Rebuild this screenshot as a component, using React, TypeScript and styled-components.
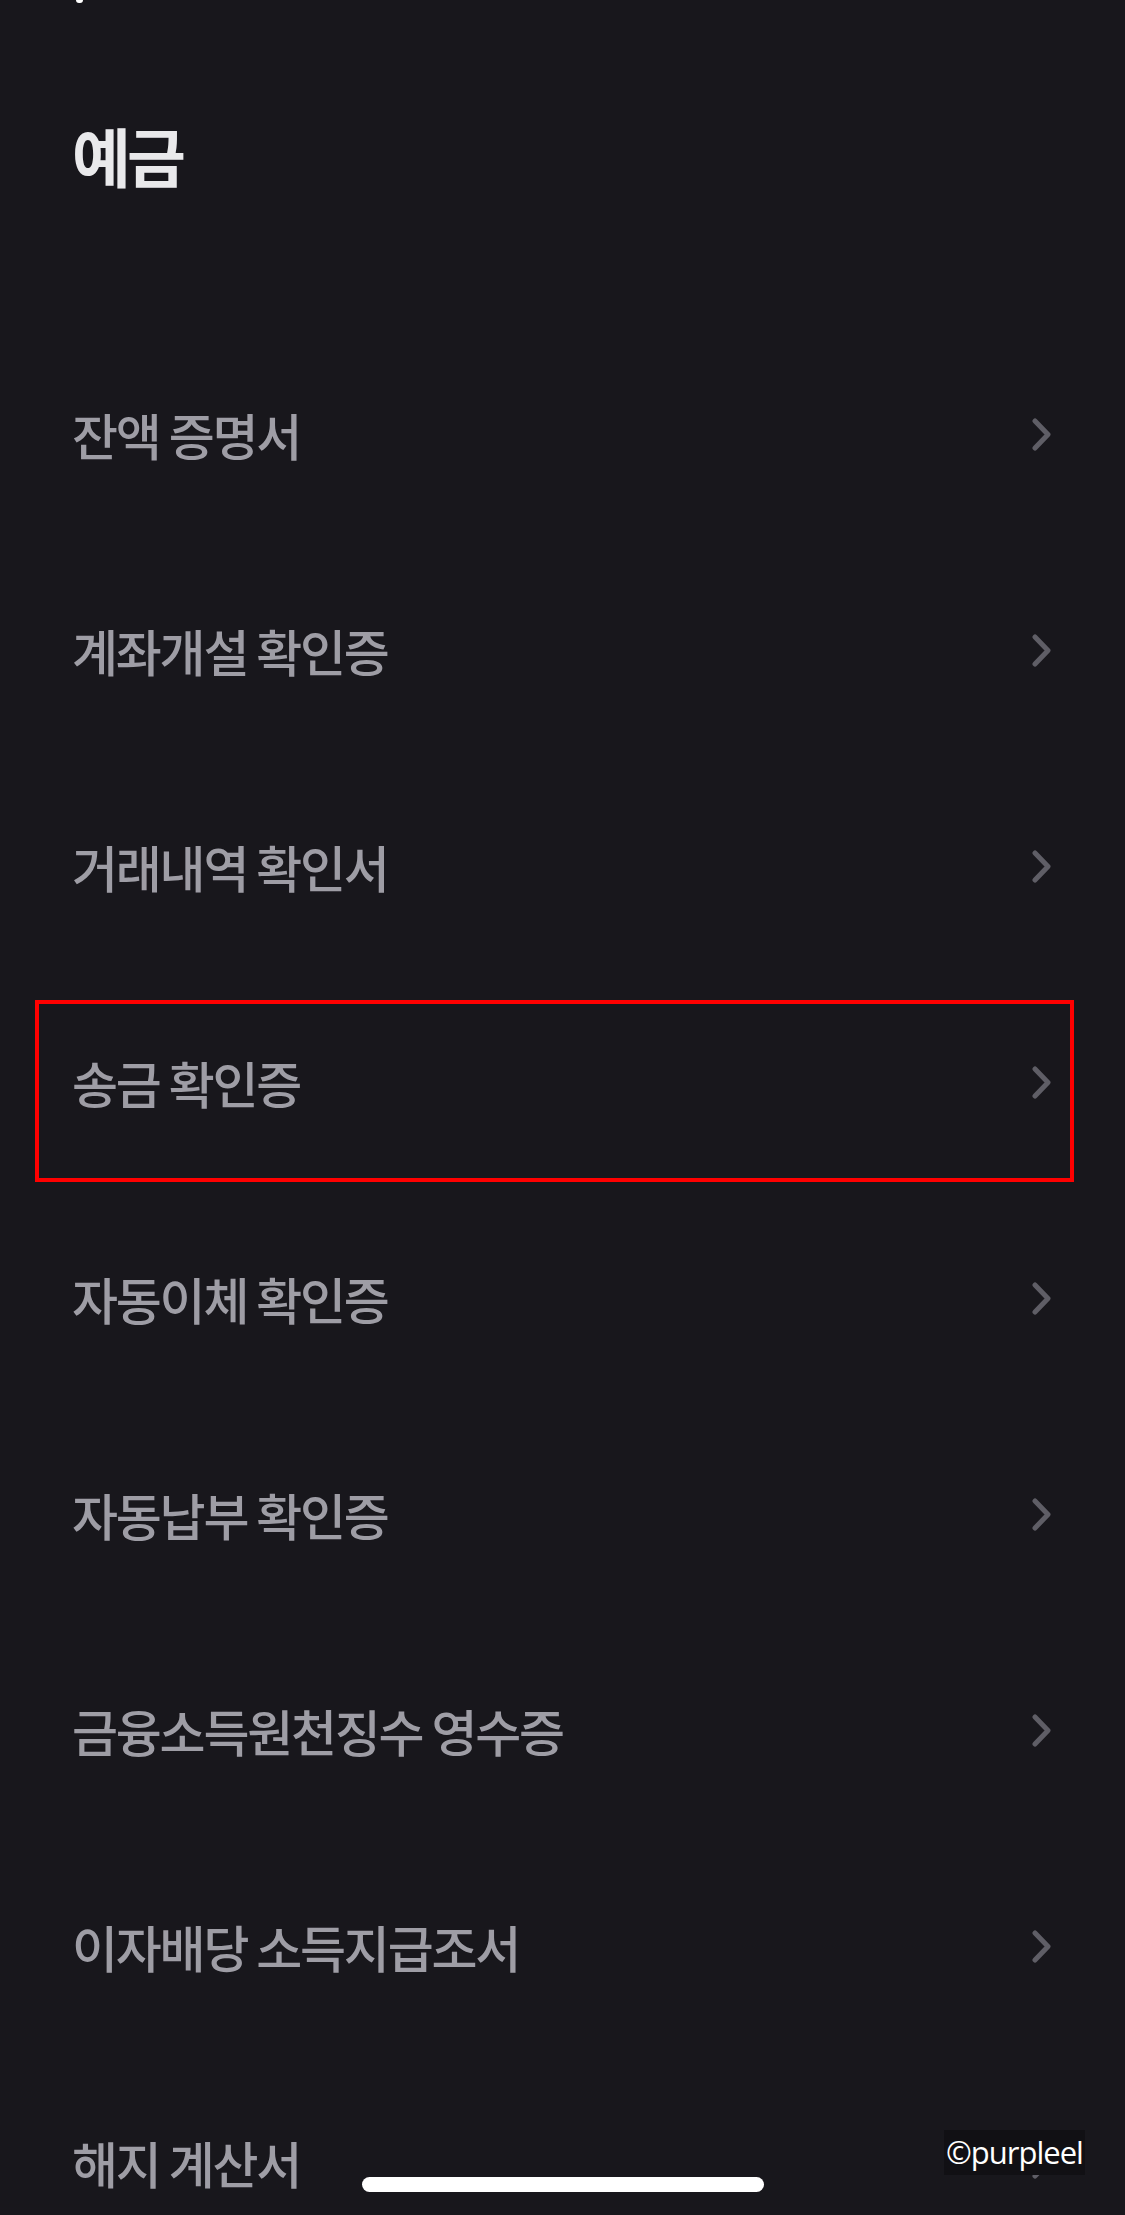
import React from 'react';
import styled, { createGlobalStyle } from 'styled-components';

const GlobalStyle = createGlobalStyle`
  html, body {
    margin: 0;
    padding: 0;
    background: #18171c;
  }
  body {
    font-family: 'Noto Sans CJK KR', 'Noto Sans', sans-serif;
  }
`;

const Page = styled.div`
  position: relative;
  width: 1125px;
  height: 2215px;
  overflow: hidden;
  background: #18171c;
  display: flex;
  flex-direction: column;
`;

const StatusCut = styled.div`
  position: absolute;
  top: -3px;
  left: 76px;
  width: 7px;
  height: 6px;
  border-radius: 3px;
  background: #ffffff;
`;

const Header = styled.header`
  flex: 0 0 326px;
  padding: 122px 0 0 72px;
  box-sizing: border-box;
`;

const Title = styled.h1`
  margin: 0;
  font-size: 64px;
  line-height: 1;
  font-weight: 700;
  letter-spacing: -4px;
  color: #e9e9eb;
`;

const List = styled.ul`
  flex: 0 0 auto;
  list-style: none;
  margin: 0;
  padding: 0;
`;

const Row = styled.li<{ $highlight?: boolean }>`
  position: relative;
  height: 216px;
  padding: 0 74px 0 72px;
  box-sizing: border-box;
  display: flex;
  align-items: center;
  justify-content: space-between;

  &::after {
    content: '';
    display: ${(p) => (p.$highlight ? 'block' : 'none')};
    position: absolute;
    left: 35px;
    right: 51px;
    top: 26px;
    bottom: 8px;
    border: 4px solid #ff0000;
  }
`;

const Label = styled.span`
  font-size: 50px;
  line-height: 1;
  font-weight: 500;
  letter-spacing: -2.2px;
  color: #9e9da5;
`;

const Chevron = styled.svg`
  width: 19px;
  height: 33px;
  flex: 0 0 auto;
`;

const HomeIndicator = styled.div`
  position: absolute;
  left: 362px;
  top: 2177px;
  width: 402px;
  height: 15px;
  border-radius: 8px;
  background: #ffffff;
`;

const Watermark = styled.div`
  position: absolute;
  left: 944px;
  top: 2130px;
  width: 141px;
  height: 45px;
  background: #111014;
  color: #ffffff;
  font-family: 'Open Sans', 'Noto Sans', sans-serif;
  font-size: 31px;
  line-height: 45px;
  letter-spacing: -1px;
  text-align: center;
  white-space: nowrap;
`;

const items = [
  '잔액 증명서',
  '계좌개설 확인증',
  '거래내역 확인서',
  '송금 확인증',
  '자동이체 확인증',
  '자동납부 확인증',
  '금융소득원천징수 영수증',
  '이자배당 소득지급조서',
  '해지 계산서',
];

const ArrowIcon = () => (
  <Chevron viewBox="0 0 19 33" fill="none">
    <polyline
      points="3,3 16,16.5 3,30"
      stroke="#5f5e66"
      strokeWidth="5"
      strokeLinecap="round"
      strokeLinejoin="round"
    />
  </Chevron>
);

const App: React.FC = () => {
  return (
    <>
      <GlobalStyle />
      <Page>
        <StatusCut />
        <Header>
          <Title>예금</Title>
        </Header>
        <List>
          {items.map((label, i) => (
            <Row key={label} $highlight={i === 3}>
              <Label>{label}</Label>
              <ArrowIcon />
            </Row>
          ))}
        </List>
        <Watermark>©purpleel</Watermark>
        <HomeIndicator />
      </Page>
    </>
  );
};

export default App;
